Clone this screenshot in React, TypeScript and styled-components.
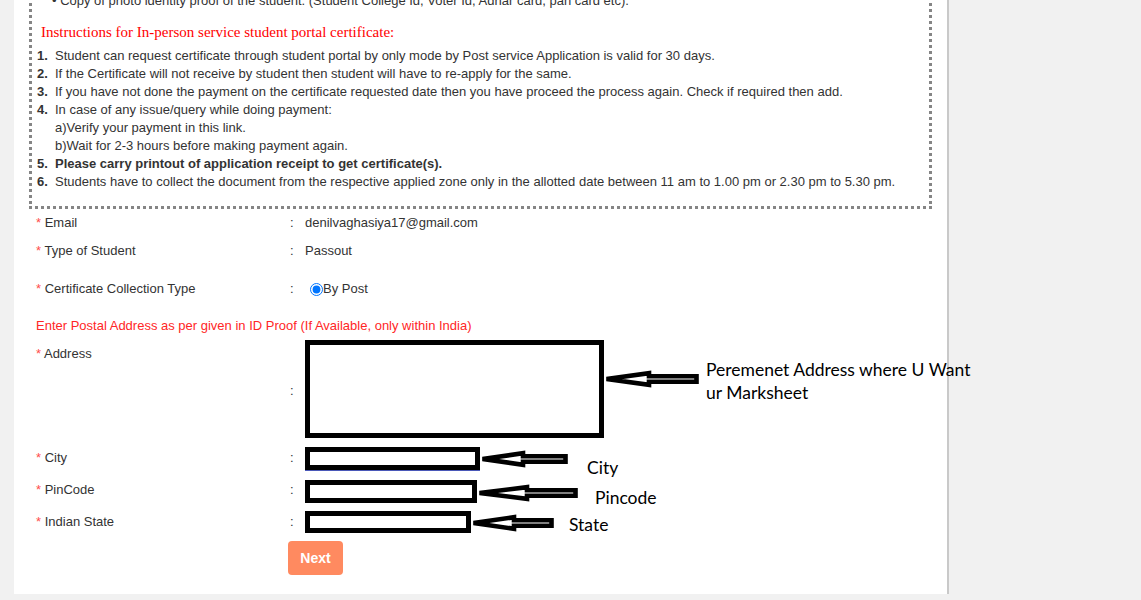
import React from "react";
import styled, { createGlobalStyle } from "styled-components";

const GlobalStyle = createGlobalStyle`
  html {
    overflow: hidden;
  }
  html, body {
    margin: 0;
    padding: 0;
    background: #f1f1f1;
  }
  body {
    font-family: "Liberation Sans", Arial, sans-serif;
  }
`;

const Page = styled.div`
  padding-left: 14px;
`;

const Panel = styled.div`
  width: 933px;
  background: #fff;
  border-right: 2px solid #c9c9c9;
  padding-bottom: 19px;
`;

const InstructionBox = styled.div`
  margin: -20px 15px 0 15px;
  border: 3px dotted #858585;
  padding: 9px 0 15px 5px;
  font-size: 13px;
  color: #333;
`;

const TopLine = styled.div`
  line-height: 18px;
  padding-left: 15px;
  white-space: nowrap;
`;

const Heading = styled.div`
  margin-top: 12px;
  padding-left: 4px;
  font-family: "Liberation Serif", "Times New Roman", serif;
  font-size: 15px;
  line-height: 20px;
  color: #ff0000;
`;

const List = styled.div`
  margin-top: 5px;
`;

const Item = styled.div<{ $bold?: boolean }>`
  display: flex;
  line-height: 18px;
  font-weight: ${(p) => (p.$bold ? "bold" : "normal")};
  white-space: nowrap;
`;

const Num = styled.span`
  width: 18px;
  font-weight: bold;
  flex-shrink: 0;
`;

const SubLine = styled.div`
  line-height: 18px;
  padding-left: 18px;
`;

const Form = styled.div`
  padding-left: 22px;
  font-size: 13px;
  color: #333;
`;

const Row = styled.div<{ $h: number }>`
  display: grid;
  grid-template-columns: 252px 17px 1fr;
  grid-template-rows: ${(p) => p.$h}px;
  align-items: center;
  height: ${(p) => p.$h}px;
`;

const Label = styled.div<{ $top?: number }>`
  line-height: 18px;
  align-self: ${(p) => (p.$top !== undefined ? "start" : "center")};
  margin-top: ${(p) => p.$top ?? 0}px;
`;

const Star = styled.span`
  color: #ff4d4d;
`;

const Colon = styled.div`
  padding-left: 2px;
  line-height: 18px;
`;

const Value = styled.div`
  display: flex;
  align-items: center;
  line-height: 18px;
`;

const AnnotatedValue = styled.div`
  display: flex;
  align-items: flex-start;
  align-self: stretch;
`;

const Radio = styled.input`
  width: 13px;
  height: 13px;
  margin: 0 0 0 5px;
  accent-color: #0075ff;
`;

const Note = styled.div`
  height: 26px;
  line-height: 26px;
  color: #ff2626;
`;

const Box = styled.input<{ $w: number; $h: number; $mt: number; $line?: boolean }>`
  box-sizing: border-box;
  width: ${(p) => p.$w}px;
  height: ${(p) => p.$h}px;
  margin: ${(p) => p.$mt}px 0 0 0;
  padding: 0;
  border: 5px solid #000;
  background: #fff;
  outline: none;
  flex-shrink: 0;
  box-shadow: ${(p) => (p.$line ? "0 1px 0 #4a58b8" : "none")};
`;

const ArrowSvg = styled.svg<{ $mt: number }>`
  display: block;
  flex-shrink: 0;
  margin-top: ${(p) => p.$mt}px;
`;

const Annotation = styled.div<{ $ml: number; $mt: number }>`
  margin-left: ${(p) => p.$ml}px;
  margin-top: ${(p) => p.$mt}px;
  font-family: Lato, "Open Sans", sans-serif;
  font-size: 17.5px;
  line-height: 23px;
  color: #000;
  white-space: nowrap;
`;

const ButtonRow = styled.div`
  padding-left: 252px;
  margin-top: 4px;
  height: 34px;
`;

const NextButton = styled.button`
  display: block;
  width: 55px;
  height: 34px;
  border: none;
  border-radius: 4px;
  background: #ff8a60;
  color: #fff;
  font-family: "Liberation Sans", Arial, sans-serif;
  font-size: 14px;
  font-weight: bold;
  padding: 0;
`;

// hollow hand-drawn arrow pointing back at the field
const Arrow = ({ len, head, mt }: { len: number; head: number; mt: number }) => (
  <ArrowSvg width={len} height={18} viewBox={`0 0 ${len} 18`} $mt={mt}>
    <polygon
      points={`2.5,9 ${head},3.2 ${head},6.2 ${len - 2.5},6.2 ${len - 2.5},11.8 ${head},11.8 ${head},14.8`}
      fill="#fff"
      stroke="#000"
      strokeWidth={4.6}
      strokeLinejoin="miter"
      strokeMiterlimit={3}
    />
  </ArrowSvg>
);

const Req = ({ children }: { children: React.ReactNode }) => (
  <>
    <Star>*</Star> {children}
  </>
);

const App = () => (
  <>
    <GlobalStyle />
    <Page>
      <Panel>
        <InstructionBox>
          <TopLine>
            • Copy of photo identity proof of the student. (Student College Id, Voter Id, Adhar card, pan card etc).
          </TopLine>
          <Heading>Instructions for In-person service student portal certificate:</Heading>
          <List>
            <Item>
              <Num>1.</Num>Student can request certificate through student portal by only mode by Post service Application is valid for 30 days.
            </Item>
            <Item>
              <Num>2.</Num>If the Certificate will not receive by student then student will have to re-apply for the same.
            </Item>
            <Item>
              <Num>3.</Num>If you have not done the payment on the certificate requested date then you have proceed the process again. Check if required then add.
            </Item>
            <Item>
              <Num>4.</Num>In case of any issue/query while doing payment:
            </Item>
            <SubLine>a)Verify your payment in this link.</SubLine>
            <SubLine>b)Wait for 2-3 hours before making payment again.</SubLine>
            <Item $bold>
              <Num>5.</Num>Please carry printout of application receipt to get certificate(s).
            </Item>
            <Item>
              <Num>6.</Num>Students have to collect the document from the respective applied zone only in the allotted date between 11 am to 1.00 pm or 2.30 pm to 5.30 pm.
            </Item>
          </List>
        </InstructionBox>

        <Form>
          <Row $h={28}>
            <Label><Req>Email</Req></Label>
            <Colon>:</Colon>
            <Value>denilvaghasiya17@gmail.com</Value>
          </Row>
          <Row $h={28}>
            <Label><Req>Type of Student</Req></Label>
            <Colon>:</Colon>
            <Value>Passout</Value>
          </Row>
          <Row $h={48}>
            <Label><Req>Certificate Collection Type</Req></Label>
            <Colon>:</Colon>
            <Value>
              <Radio type="radio" checked readOnly />
              By Post
            </Value>
          </Row>
          <Note>Enter Postal Address as per given in ID Proof (If Available, only within India)</Note>
          <Row $h={103}>
            <Label $top={6}><Req>Address</Req></Label>
            <Colon>:</Colon>
            <AnnotatedValue>
              <Box $w={299} $h={98} $mt={1} readOnly />
              <Arrow len={95} head={45} mt={31} />
              <Annotation $ml={7} $mt={19}>
                Peremenet Address where U Want
                <br />
                ur Marksheet
              </Annotation>
            </AnnotatedValue>
          </Row>
          <Row $h={32}>
            <Label><Req>City</Req></Label>
            <Colon>:</Colon>
            <AnnotatedValue>
              <Box $w={175} $h={23} $mt={5} $line readOnly />
              <Arrow len={88} head={43} mt={8} />
              <Annotation $ml={19} $mt={14}>City</Annotation>
            </AnnotatedValue>
          </Row>
          <Row $h={32}>
            <Label><Req>PinCode</Req></Label>
            <Colon>:</Colon>
            <AnnotatedValue>
              <Box $w={172} $h={23} $mt={6} readOnly />
              <Arrow len={101} head={50} mt={10} />
              <Annotation $ml={17} $mt={12}>Pincode</Annotation>
            </AnnotatedValue>
          </Row>
          <Row $h={31}>
            <Label><Req>Indian State</Req></Label>
            <Colon>:</Colon>
            <AnnotatedValue>
              <Box $w={166} $h={22} $mt={5} readOnly />
              <Arrow len={83} head={43} mt={8} />
              <Annotation $ml={15} $mt={7}>State</Annotation>
            </AnnotatedValue>
          </Row>
          <ButtonRow>
            <NextButton>Next</NextButton>
          </ButtonRow>
        </Form>
      </Panel>
    </Page>
  </>
);

export default App;
